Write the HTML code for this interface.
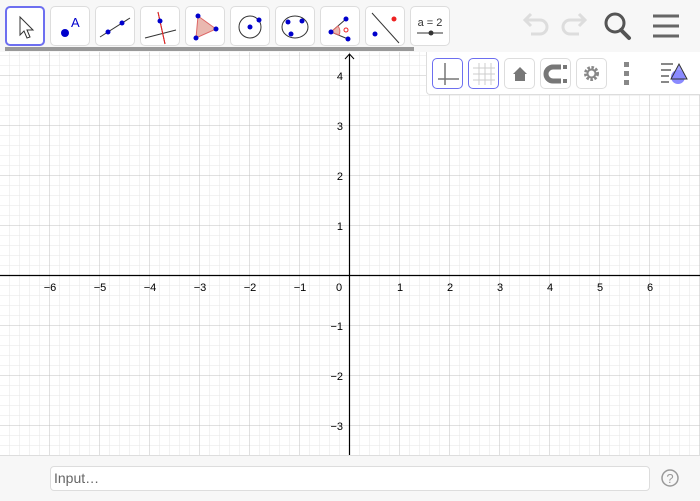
<!DOCTYPE html>
<html><head><meta charset="utf-8"><style>
body{margin:0;width:700px;height:500px;overflow:hidden;background:#fff;font-family:"Liberation Sans",sans-serif;position:relative}
#tb{position:absolute;left:0;top:0;width:700px;height:52px;background:#f7f7f7}
.b{position:absolute;top:6px;width:38px;height:38px;background:#fff;border:1px solid #ddd;border-radius:5px}
.b svg{position:absolute;left:0;top:0}
#sb{position:absolute;left:426px;top:52px;width:274px;height:42px;background:#fff;border:1px solid #ddd;border-right:none;border-top:none;border-radius:0 0 0 4px}
.s{position:absolute;top:6px;width:29px;height:29px;border:1px solid #ddd;border-radius:5px;background:#fff}
#ib{position:absolute;left:0;top:455px;width:700px;height:45px;background:#f7f7f7;border-top:1px solid #ddd}
</style></head><body>
<svg width="700" height="500" style="position:absolute;left:0;top:0">
<defs>
<pattern id="mi" patternUnits="userSpaceOnUse" x="9.5" y="5.5" width="10" height="10"><path d="M0 0V10M0 0H10" stroke="#e6e6e6" stroke-width="1" fill="none"/></pattern>
<pattern id="ma" patternUnits="userSpaceOnUse" x="49.5" y="25.5" width="50" height="50"><path d="M0 0V50M0 0H50" stroke="#c0c0c0" stroke-width="1" fill="none"/></pattern>
</defs>
<rect x="0" y="52" width="700" height="403" fill="url(#mi)"/>
<rect x="0" y="52" width="700" height="403" fill="url(#ma)"/>
<path d="M0 275.5H700M349.5 455V54" stroke="#000" stroke-width="1.2"/>
<path d="M345 59L349.5 54L354 59" stroke="#000" fill="none"/>
<g font-size="11" fill="#000" text-anchor="middle">
<text x="50" y="291">−6</text><text x="100" y="291">−5</text><text x="150" y="291">−4</text><text x="200" y="291">−3</text><text x="250" y="291">−2</text><text x="300" y="291">−1</text><text x="339" y="291">0</text>
<text x="400" y="291">1</text><text x="450" y="291">2</text><text x="500" y="291">3</text><text x="550" y="291">4</text><text x="600" y="291">5</text><text x="650" y="291">6</text>
</g>
<g font-size="11" fill="#000" text-anchor="end">
<text x="343" y="80">4</text><text x="343" y="130">3</text><text x="343" y="180">2</text><text x="343" y="230">1</text>
<text x="343" y="330">−1</text><text x="343" y="380">−2</text><text x="343" y="430">−3</text>
</g>
</svg>
<div id="tb">
<div class="b" style="left:5px;border:2px solid #6d6ff0;width:36px;height:36px"><svg width="36" height="36"><path d="M13 9L13 27L17 23L20 30L23 29L20 22L26 22Z" fill="#fff" stroke="#333" stroke-width="1"/></svg></div>
<div class="b" style="left:50px"><svg width="38" height="38"><circle cx="14" cy="26" r="4" fill="#00c"/><text x="20" y="20" font-size="13" fill="#00c" font-family="Liberation Sans">A</text></svg></div>
<div class="b" style="left:95px"><svg width="38" height="38"><path d="M4 30L34 11" stroke="#333"/><circle cx="12" cy="25" r="2.5" fill="#00c"/><circle cx="26" cy="16" r="2.5" fill="#00c"/></svg></div>
<div class="b" style="left:140px"><svg width="38" height="38"><path d="M4 31L35 23M17 5L24 37" stroke="#333"/><path d="M17 5L24 37" stroke="#e22"/><circle cx="19" cy="14" r="2.5" fill="#00c"/></svg></div>
<div class="b" style="left:185px"><svg width="38" height="38"><path d="M12 9L30 22L10 31Z" fill="#eab8b0" stroke="#d66"/><circle cx="12" cy="9" r="2.5" fill="#00c"/><circle cx="30" cy="22" r="2.5" fill="#00c"/><circle cx="10" cy="31" r="2.5" fill="#00c"/></svg></div>
<div class="b" style="left:230px"><svg width="38" height="38"><circle cx="19" cy="20" r="11" fill="none" stroke="#333"/><circle cx="19" cy="20" r="2.5" fill="#00c"/><circle cx="28" cy="13" r="2.5" fill="#00c"/></svg></div>
<div class="b" style="left:275px"><svg width="38" height="38"><ellipse cx="19" cy="20" rx="13" ry="11" fill="none" stroke="#333"/><circle cx="12" cy="15" r="2.5" fill="#00c"/><circle cx="26" cy="14" r="2.5" fill="#00c"/><circle cx="15" cy="27" r="2.5" fill="#00c"/></svg></div>
<div class="b" style="left:320px"><svg width="38" height="38"><path d="M25 12L10 25L27 32" fill="none" stroke="#333"/><path d="M10 25L17 19A9 9 0 0 1 18 28Z" fill="#eab8b0" stroke="#d66"/><circle cx="25" cy="12" r="2.5" fill="#00c"/><circle cx="10" cy="25" r="2.5" fill="#00c"/><circle cx="27" cy="32" r="2.5" fill="#00c"/><circle cx="25" cy="23" r="2" fill="none" stroke="#e22"/></svg></div>
<div class="b" style="left:365px"><svg width="38" height="38"><path d="M6 6L33 36" stroke="#333"/><circle cx="9" cy="27" r="2.5" fill="#00c"/><circle cx="28" cy="12" r="2.5" fill="#e22"/></svg></div>
<div class="b" style="left:410px"><svg width="38" height="38"><text x="19" y="19" font-size="11" text-anchor="middle" fill="#333" font-family="Liberation Sans">a = 2</text><path d="M6 26H32" stroke="#333"/><circle cx="20" cy="26" r="2.5" fill="#333"/></svg></div>
<div style="position:absolute;left:5px;top:47px;width:409px;height:4px;background:#999"></div>
<svg width="180" height="52" style="position:absolute;left:515px;top:0"><path d="M10 20H25A7 7 0 0 1 25 34H16M16 14L10 20L16 26" fill="none" stroke="#ddd" stroke-width="3"/><path d="M70 20H55A7 7 0 0 0 55 34H64M64 14L70 20L64 26" fill="none" stroke="#ddd" stroke-width="3"/><circle cx="100" cy="23" r="9" fill="none" stroke="#555" stroke-width="3"/><path d="M106 30L114 38" stroke="#555" stroke-width="4" stroke-linecap="round"/><path d="M138 16H164M138 26H164M138 36H164" stroke="#666" stroke-width="3"/></svg>
</div>
<div id="sb">
<div class="s" style="left:5px;border-color:#6d6ff0"><svg width="29" height="29"><path d="M5 20H26M12 4V26" stroke="#777" stroke-width="1.5"/></svg></div>
<div class="s" style="left:41px;border-color:#6d6ff0"><svg width="29" height="29"><path d="M4 9H26M4 15H26M4 21H26M10 4V26M16 4V26M22 4V26" stroke="#ccc"/></svg></div>
<div class="s" style="left:77px"><svg width="29" height="29"><path d="M8 15L15 8L22 15H20V22H10V15Z" fill="#777"/></svg></div>
<div class="s" style="left:113px"><svg width="29" height="29"><path d="M20 8H12A7 7 0 0 0 12 22H20" fill="none" stroke="#777" stroke-width="5"/><path d="M22 8H26M22 22H26" stroke="#777" stroke-width="4"/></svg></div>
<div class="s" style="left:149px"><svg width="29" height="29"><circle cx="14.5" cy="14.5" r="6" fill="none" stroke="#888" stroke-width="3" stroke-dasharray="2.5 1.5"/><circle cx="14.5" cy="14.5" r="4" fill="none" stroke="#888" stroke-width="2"/></svg></div>
<svg width="12" height="42" style="position:absolute;left:195px;top:0"><rect x="2" y="10" width="5" height="5" fill="#888"/><rect x="2" y="19" width="5" height="5" fill="#888"/><rect x="2" y="28" width="5" height="5" fill="#888"/></svg>
<svg width="40" height="42" style="position:absolute;left:232px;top:0"><path d="M2 12H14M2 18H12M2 24H10M2 30H10" stroke="#888" stroke-width="2"/><circle cx="19" cy="25" r="7" fill="#8a8aff"/><path d="M12 27L20 12L28 27Z" fill="#8a8aff" stroke="#333" stroke-width="1" fill-opacity=".8"/></svg>
</div>
<div id="ib">
<div style="position:absolute;left:50px;top:10px;width:595px;height:23px;background:#fff;border:1px solid #ddd;border-radius:4px;font-size:14px;color:#666;line-height:23px;padding-left:3px">Input…</div>
<svg width="20" height="20" style="position:absolute;left:660px;top:12px"><circle cx="10" cy="10" r="8" fill="none" stroke="#999" stroke-width="1.5"/><text x="10" y="15" font-size="13" text-anchor="middle" fill="#999" font-family="Liberation Sans">?</text></svg>
</div>
</body></html>
